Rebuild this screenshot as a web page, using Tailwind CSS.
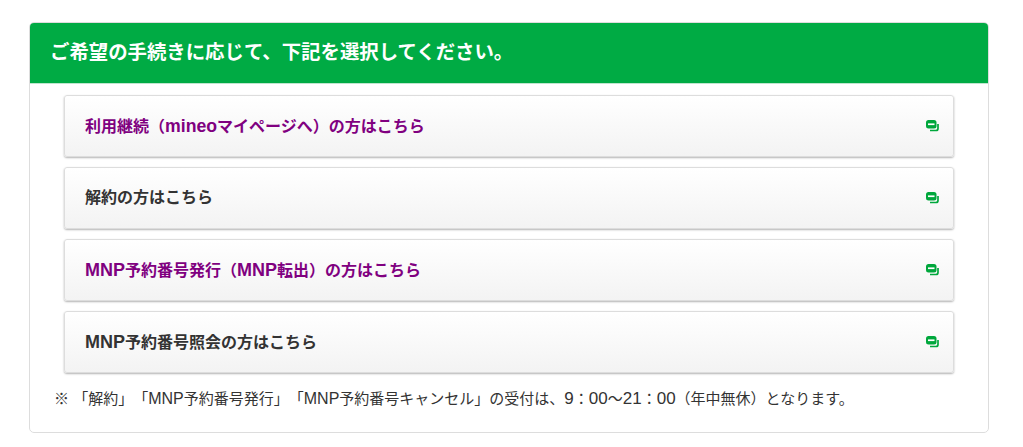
<!DOCTYPE html>
<html lang="ja">

<head>
    <meta charset="UTF-8">
    <title>手続き選択</title>
    <script src="https://cdn.jsdelivr.net/npm/@tailwindcss/browser@4"></script>
</head>

<body class="bg-white font-['Liberation_Sans','Noto_Sans_CJK_JP',sans-serif] text-[#333] [text-spacing-trim:space-all]">
    <div class="pt-[22px] pl-[29px] w-[989px]">
        <div class="h-[411px] border border-[#ddd] rounded-[5px] overflow-hidden">
            <h2 class="h-[61px] bg-[#00ab44] border-b border-[#bfe5ce] pl-[20px] flex items-center text-white text-[19.4px] font-bold">ご希望の手続きに応じて、下記を選択してください。</h2>

            <div class="pt-[11px] pl-[34px] pr-[34px] flex flex-col gap-[10px]">
                <a class="h-[62px] pl-[20px] pr-[14px] flex items-center justify-between border border-[#ddd] rounded-[3px] bg-linear-to-b from-white to-[#f3f3f3] shadow-[0_1px_2px_rgba(0,0,0,0.3)] text-[16px] leading-[24px] font-bold text-[#800080]" href="#">
                    <span>利用継続（<span class="text-[17.7px]">mineo</span>マイページへ）の方はこちら</span>
                    <svg class="w-[13px] h-[12px]" viewBox="0 0 13 12"><rect x="0" y="0" width="10.5" height="8.5" rx="2.5" fill="#00a73c"/><rect x="2" y="3.4" width="6.5" height="1.7" fill="#fff"/><path d="M12 4v4.5a2 2 0 0 1-2 2H4" fill="none" stroke="#00a73c" stroke-width="1.7"/></svg>
                </a>
                <a class="h-[62px] pl-[20px] pr-[14px] flex items-center justify-between border border-[#ddd] rounded-[3px] bg-linear-to-b from-white to-[#f3f3f3] shadow-[0_1px_2px_rgba(0,0,0,0.3)] text-[16px] leading-[24px] font-bold text-[#333]" href="#">
                    <span>解約の方はこちら</span>
                    <svg class="w-[13px] h-[12px]" viewBox="0 0 13 12"><rect x="0" y="0" width="10.5" height="8.5" rx="2.5" fill="#00a73c"/><rect x="2" y="3.4" width="6.5" height="1.7" fill="#fff"/><path d="M12 4v4.5a2 2 0 0 1-2 2H4" fill="none" stroke="#00a73c" stroke-width="1.7"/></svg>
                </a>
                <a class="h-[62px] pl-[20px] pr-[14px] flex items-center justify-between border border-[#ddd] rounded-[3px] bg-linear-to-b from-white to-[#f3f3f3] shadow-[0_1px_2px_rgba(0,0,0,0.3)] text-[16px] leading-[24px] font-bold text-[#800080]" href="#">
                    <span><span class="text-[18px]">MNP</span>予約番号発行（<span class="text-[18px]">MNP</span>転出）の方はこちら</span>
                    <svg class="w-[13px] h-[12px]" viewBox="0 0 13 12"><rect x="0" y="0" width="10.5" height="8.5" rx="2.5" fill="#00a73c"/><rect x="2" y="3.4" width="6.5" height="1.7" fill="#fff"/><path d="M12 4v4.5a2 2 0 0 1-2 2H4" fill="none" stroke="#00a73c" stroke-width="1.7"/></svg>
                </a>
                <a class="h-[62px] pl-[20px] pr-[14px] flex items-center justify-between border border-[#ddd] rounded-[3px] bg-linear-to-b from-white to-[#f3f3f3] shadow-[0_1px_2px_rgba(0,0,0,0.3)] text-[16px] leading-[24px] font-bold text-[#333]" href="#">
                    <span><span class="text-[18px]">MNP</span>予約番号照会の方はこちら</span>
                    <svg class="w-[13px] h-[12px]" viewBox="0 0 13 12"><rect x="0" y="0" width="10.5" height="8.5" rx="2.5" fill="#00a73c"/><rect x="2" y="3.4" width="6.5" height="1.7" fill="#fff"/><path d="M12 4v4.5a2 2 0 0 1-2 2H4" fill="none" stroke="#00a73c" stroke-width="1.7"/></svg>
                </a>
            </div>

            <p class="mt-[16px] pl-[24px] text-[15px] leading-[20px]">※ 「解約」「<span class="text-[16px]">MNP</span>予約番号発行」「<span class="text-[16px]">MNP</span>予約番号キャンセル」の受付は、<span class="text-[17px]">9</span>：<span class="text-[17px]">00</span>～<span class="text-[17px]">21</span>：<span class="text-[17px]">00</span>（年中無休）となります。</p>
        </div>
    </div>
</body>

</html>
